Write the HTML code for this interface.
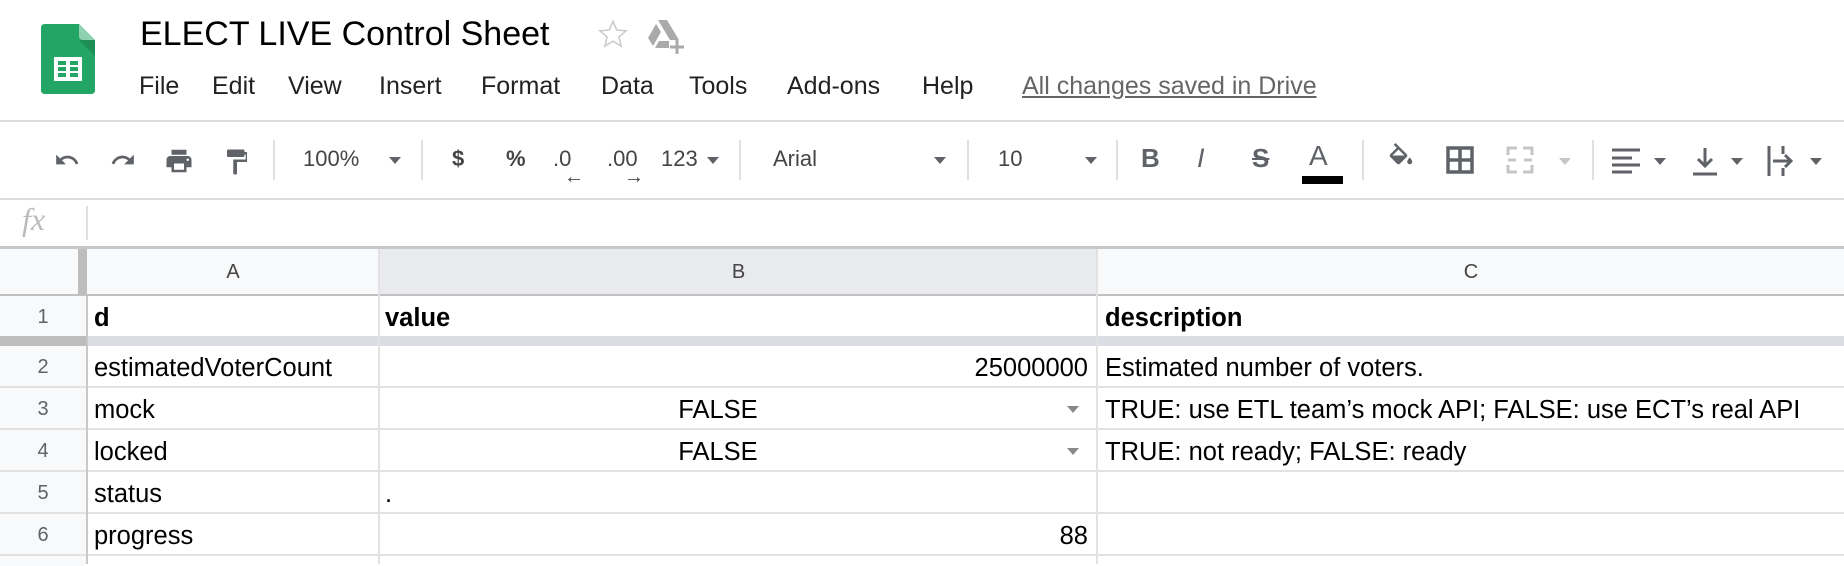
<!DOCTYPE html>
<html><head><meta charset="utf-8"><style>
*{margin:0;padding:0;box-sizing:border-box}
body{width:1844px;height:564px;overflow:hidden;background:#fff;font-family:"Liberation Sans",Arial,sans-serif;position:relative;color:#000}
.a{position:absolute;white-space:nowrap}
.menu{top:72px;font-size:25px;color:#222}
.tb{top:145px;font-size:22px;color:#444;line-height:28px}
.div{position:absolute;top:140px;width:2px;height:40px;background:#e0e0e0}
.arr{position:absolute;width:0;height:0;border-left:6px solid transparent;border-right:6px solid transparent;border-top:7px solid #5f6368}
.hl{position:absolute;left:0;width:1844px;background:#dadce0}
.cell{position:absolute;font-size:25.5px;line-height:42px}
.rn{position:absolute;left:0;width:86px;text-align:center;font-size:20px;color:#5f6368;background:#f8f9fa}
.vl{position:absolute;width:2px;background:#e2e2e2}
</style></head><body>
<svg class="a" style="left:41px;top:24px" width="54" height="70" viewBox="0 0 54 70">
<path d="M4 0H38L54 16V66Q54 70 50 70H4Q0 70 0 66V4Q0 0 4 0Z" fill="#23a566"/>
<path d="M38 0L54 16H42Q38 16 38 12Z" fill="#8ed1b1"/>
<path d="M38 16L54 32V16Z" fill="#1e8e56"/>
<rect x="13" y="33" width="28" height="24" fill="#fff"/>
<rect x="17" y="37" width="8" height="4" fill="#23a566"/><rect x="29" y="37" width="8" height="4" fill="#23a566"/>
<rect x="17" y="43" width="8" height="4" fill="#23a566"/><rect x="29" y="43" width="8" height="4" fill="#23a566"/>
<rect x="17" y="49" width="8" height="4" fill="#23a566"/><rect x="29" y="49" width="8" height="4" fill="#23a566"/>
</svg>
<div class="a" style="left:140px;top:15px;font-size:34px;color:#000">ELECT LIVE Control Sheet</div>
<svg class="a" style="left:596px;top:18px" width="34" height="32" viewBox="0 0 24 24"><path d="M12 2.5l2.8 6.5 7 .6-5.3 4.6 1.6 6.9L12 17.4 5.9 21.1l1.6-6.9L2.2 9.6l7-.6z" fill="none" stroke="#ccc" stroke-width="1.2"/></svg>
<svg class="a" style="left:648px;top:20px" width="38" height="34" viewBox="0 0 38 34"><path d="M10 0h9l12 20h-9z" fill="#aaa"/><path d="M8 4l5 8-8 14L0 18z" fill="#aaa"/><path d="M7 28l4-7h10v7z" fill="#aaa"/><path d="M29 20v14M22 27h14" stroke="#aaa" stroke-width="3"/></svg>
<div class="a menu" style="left:139px">File</div>
<div class="a menu" style="left:212px">Edit</div>
<div class="a menu" style="left:288px">View</div>
<div class="a menu" style="left:379px">Insert</div>
<div class="a menu" style="left:481px">Format</div>
<div class="a menu" style="left:601px">Data</div>
<div class="a menu" style="left:689px">Tools</div>
<div class="a menu" style="left:787px">Add-ons</div>
<div class="a menu" style="left:922px">Help</div>
<div class="a menu" style="left:1022px;color:#666;text-decoration:underline">All changes saved in Drive</div>
<div class="hl" style="top:120px;height:2px"></div>
<svg class="a" style="left:50px;top:147px" width="34" height="26" viewBox="0 0 24 24"><path d="M12.5 8c-2.6 0-5 1-6.9 2.6L2 7v9h9l-3.6-3.6c1.4-1.2 3.2-1.9 5.1-1.9 3.5 0 6.5 2.3 7.6 5.5l2.4-.8C21 11 17.1 8 12.5 8z" fill="#5f6368"/></svg>
<svg class="a" style="left:106px;top:147px" width="34" height="26" viewBox="0 0 24 24"><path d="M18.4 10.6C16.6 9 14.2 8 11.5 8 6.9 8 3 11 1.6 15.2l2.4.8c1-3.2 4-5.5 7.6-5.5 1.9 0 3.7.7 5.1 1.9L13 16h9V7z" fill="#5f6368"/></svg>
<svg class="a" style="left:163px;top:146px" width="32" height="30" viewBox="0 0 24 24"><path d="M19 8H5c-1.7 0-3 1.3-3 3v6h4v4h12v-4h4v-6c0-1.7-1.3-3-3-3zm-3 11H8v-5h8v5zm3-7c-.6 0-1-.4-1-1s.4-1 1-1 1 .4 1 1-.4 1-1 1zM18 3H6v4h12z" fill="#5f6368"/></svg>
<svg class="a" style="left:222px;top:146px" width="30" height="32" viewBox="0 0 24 24"><path d="M18 4V3c0-.6-.4-1-1-1H5c-.6 0-1 .4-1 1v4c0 .6.4 1 1 1h12c.6 0 1-.4 1-1V6h1v4H9v11c0 .6.4 1 1 1h1c.6 0 1-.4 1-1v-9h8V4h-2z" fill="#5f6368"/></svg>
<div class="div" style="left:273px"></div>
<div class="a tb" style="left:303px">100%</div><div class="arr" style="left:389px;top:157px"></div>
<div class="div" style="left:421px"></div>
<div class="a tb" style="left:452px;font-weight:bold">$</div>
<div class="a tb" style="left:506px;font-weight:bold">%</div>
<div class="a tb" style="left:553px">.0</div>
<div class="a" style="left:564px;top:166px;font-size:20px;color:#444;font-weight:bold">&#8592;</div>
<div class="a tb" style="left:607px">.00</div>
<div class="a" style="left:624px;top:166px;font-size:20px;color:#444;font-weight:bold">&#8594;</div>
<div class="a tb" style="left:661px">123</div><div class="arr" style="left:707px;top:157px"></div>
<div class="div" style="left:739px"></div>
<div class="a tb" style="left:773px">Arial</div><div class="arr" style="left:934px;top:157px"></div>
<div class="div" style="left:967px"></div>
<div class="a tb" style="left:998px">10</div><div class="arr" style="left:1085px;top:157px"></div>
<div class="div" style="left:1116px"></div>
<div class="a" style="left:1141px;top:143px;font-size:26px;font-weight:bold;color:#5f6368">B</div>
<div class="a" style="left:1197px;top:143px;font-size:27px;font-style:italic;color:#5f6368">I</div>
<div class="a" style="left:1252px;top:143px;font-size:26px;font-weight:bold;color:#5f6368;text-decoration:line-through">S</div>
<div class="a" style="left:1309px;top:140px;font-size:28px;color:#5f6368">A</div>
<div style="position:absolute;left:1302px;top:176px;width:41px;height:8px;background:#000"></div>
<div class="div" style="left:1362px"></div>
<svg class="a" style="left:1386px;top:142px" width="30" height="32" viewBox="0 0 24 24"><path d="M16.6 9L7.6 0 6.2 1.4l2.4 2.4-5.2 5.2c-.6.6-.6 1.5 0 2.1l5.5 5.5c.3.3.7.4 1.1.4s.8-.1 1.1-.4l5.5-5.5c.6-.6.6-1.5 0-2.1zM5.2 10L10 5.2 14.8 10H5.2zM19 11.5s-2 2.2-2 3.5c0 1.1.9 2 2 2s2-.9 2-2c0-1.3-2-3.5-2-3.5z" fill="#5f6368"/></svg>
<svg class="a" style="left:1446px;top:146px" width="28" height="28" viewBox="0 0 28 28"><path d="M2 2h24v24H2z M14 2v24 M2 14h24" fill="none" stroke="#5f6368" stroke-width="3.5"/></svg>
<svg class="a" style="left:1506px;top:146px" width="28" height="28" viewBox="0 0 28 28"><path d="M2 9V2h9M17 2h9v7M26 19v7h-9M11 26H2v-7M2 14h8M26 14h-8" fill="none" stroke="#c5c5c5" stroke-width="3"/></svg>
<div class="arr" style="left:1559px;top:158px;border-top-color:#c5c5c5"></div>
<div class="div" style="left:1592px"></div>
<svg class="a" style="left:1612px;top:148px" width="28" height="26" viewBox="0 0 28 26"><path d="M0 2h28M0 10h20M0 17h28M0 24h20" stroke="#5f6368" stroke-width="3"/></svg>
<div class="arr" style="left:1654px;top:158px"></div>
<svg class="a" style="left:1692px;top:146px" width="26" height="30" viewBox="0 0 26 30"><path d="M13 2v18M6 13l7 7 7-7M1 28h24" fill="none" stroke="#5f6368" stroke-width="3"/></svg>
<div class="arr" style="left:1731px;top:158px"></div>
<svg class="a" style="left:1767px;top:146px" width="30" height="30" viewBox="0 0 30 30"><path d="M2 0v30M16 0v8M16 22v8M6 15h18M18 9l6 6-6 6" fill="none" stroke="#5f6368" stroke-width="3"/></svg>
<div class="arr" style="left:1810px;top:158px"></div>
<div class="hl" style="top:198px;height:2px"></div>
<div class="a" style="left:22px;top:201px;font-size:32px;font-style:italic;font-family:'Liberation Serif',serif;color:#bbb">fx</div>
<div style="position:absolute;left:86px;top:206px;width:2px;height:34px;background:#e0e0e0"></div>
<div class="hl" style="top:246px;height:3px;background:#c8c8c8"></div>
<div style="position:absolute;left:0;top:249px;width:78px;height:46px;background:#f8f9fa"></div>
<div style="position:absolute;left:78px;top:249px;width:9px;height:46px;background:#bdbdbd"></div>
<div style="position:absolute;left:87px;top:249px;width:292px;height:46px;background:#f8f9fa;text-align:center;font-size:20px;line-height:46px;color:#444">A</div>
<div style="position:absolute;left:380px;top:249px;width:717px;height:46px;background:#e8eaed;text-align:center;font-size:20px;line-height:46px;color:#444">B</div>
<div style="position:absolute;left:1098px;top:249px;width:746px;height:46px;background:#f8f9fa;text-align:center;font-size:20px;line-height:46px;color:#444">C</div>
<div class="hl" style="top:294px;height:2px;background:#c0c0c0"></div>
<div class="rn" style="top:296px;height:40px;line-height:42px">1</div>
<div style="position:absolute;left:0;top:336px;width:87px;height:10px;background:#bdbdbd"></div>
<div style="position:absolute;left:87px;top:336px;width:1757px;height:10px;background:#dadde3"></div>
<div class="rn" style="top:346px;height:40px;line-height:42px">2</div>
<div class="rn" style="top:388px;height:41px;line-height:42px">3</div>
<div class="rn" style="top:430px;height:41px;line-height:42px">4</div>
<div class="rn" style="top:472px;height:41px;line-height:42px">5</div>
<div class="rn" style="top:514px;height:41px;line-height:42px">6</div>
<div class="rn" style="top:556px;height:10px"></div>
<div class="hl" style="top:386px;height:2px;background:#e2e2e2"></div>
<div class="hl" style="top:428px;height:2px;background:#e2e2e2"></div>
<div class="hl" style="top:470px;height:2px;background:#e2e2e2"></div>
<div class="hl" style="top:512px;height:2px;background:#e2e2e2"></div>
<div class="hl" style="top:554px;height:2px;background:#e2e2e2"></div>
<div style="position:absolute;left:86px;top:296px;width:2px;height:268px;background:#c8c8c8"></div>
<div class="vl" style="left:378px;top:249px;height:315px"></div>
<div class="vl" style="left:1096px;top:249px;height:315px"></div>
<div class="cell" style="left:94px;top:297px;font-weight:bold">d</div>
<div class="cell" style="left:385px;top:297px;font-weight:bold">value</div>
<div class="cell" style="left:1105px;top:297px;font-weight:bold">description</div>
<div class="cell" style="left:94px;top:347px">estimatedVoterCount</div>
<div class="cell" style="left:380px;top:347px;width:708px;text-align:right">25000000</div>
<div class="cell" style="left:1105px;top:347px">Estimated number of voters.</div>
<div class="cell" style="left:94px;top:389px">mock</div>
<div class="cell" style="left:380px;top:389px;width:676px;text-align:center">FALSE</div>
<div class="arr" style="left:1067px;top:406px;border-top-color:#888"></div>
<div class="cell" style="left:1105px;top:389px">TRUE: use ETL team’s mock API; FALSE: use ECT’s real API</div>
<div class="cell" style="left:94px;top:431px">locked</div>
<div class="cell" style="left:380px;top:431px;width:676px;text-align:center">FALSE</div>
<div class="arr" style="left:1067px;top:448px;border-top-color:#888"></div>
<div class="cell" style="left:1105px;top:431px">TRUE: not ready; FALSE: ready</div>
<div class="cell" style="left:94px;top:473px">status</div>
<div class="cell" style="left:385px;top:473px">.</div>
<div class="cell" style="left:94px;top:515px">progress</div>
<div class="cell" style="left:380px;top:515px;width:708px;text-align:right">88</div>
</body></html>
